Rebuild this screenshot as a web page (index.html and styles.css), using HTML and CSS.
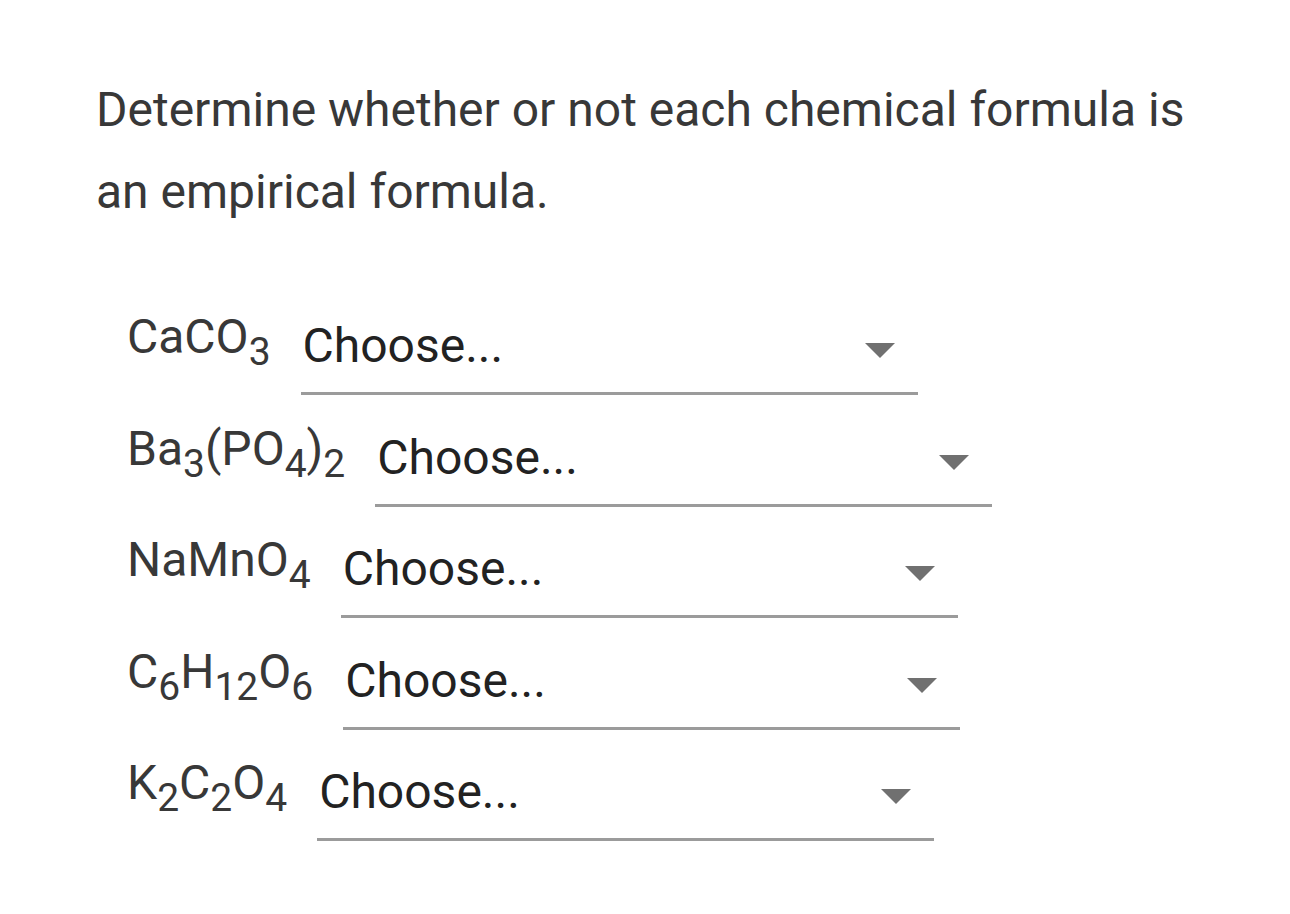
FILE: index.html
```html
<!DOCTYPE html>
<html>
<head>
<meta charset="utf-8">
<link rel="stylesheet" href="styles.css">
</head>
<body>
<div class="page">
  <p class="question">Determine whether or not each chemical formula is an empirical formula.</p>
  <div class="rows">
    <div class="row">
      <span class="formula">CaCO<sub>3</sub></span>
      <div class="select"><span class="value">Choose...</span><span class="arrow"></span></div>
    </div>
    <div class="row">
      <span class="formula">Ba<sub>3</sub>(PO<sub>4</sub>)<sub>2</sub></span>
      <div class="select"><span class="value">Choose...</span><span class="arrow"></span></div>
    </div>
    <div class="row">
      <span class="formula">NaMnO<sub>4</sub></span>
      <div class="select"><span class="value">Choose...</span><span class="arrow"></span></div>
    </div>
    <div class="row">
      <span class="formula">C<sub>6</sub>H<sub>12</sub>O<sub>6</sub></span>
      <div class="select"><span class="value">Choose...</span><span class="arrow"></span></div>
    </div>
    <div class="row">
      <span class="formula">K<sub>2</sub>C<sub>2</sub>O<sub>4</sub></span>
      <div class="select"><span class="value">Choose...</span><span class="arrow"></span></div>
    </div>
  </div>
</div>
</body>
</html>
```
FILE: styles.css
```css
html, body {
  margin: 0;
  padding: 0;
  background: #ffffff;
}
.page {
  padding: 69px 0 0 96px;
  font-family: Roboto, "Liberation Sans", sans-serif;
}
.question {
  margin: 0;
  width: 1120px;
  font-size: 48px;
  line-height: 82px;
  color: #383838;
}
.rows {
  margin-top: 67px;
  padding-left: 31px;
}
.row {
  display: flex;
  align-items: flex-start;
  height: 111.5px;
}
.formula {
  margin-top: 9px;
  margin-right: 30px;
  font-size: 48px;
  line-height: 56px;
  color: #383838;
  white-space: nowrap;
}
.formula sub {
  font-size: 39px;
  vertical-align: -12px;
  line-height: 0;
}
.select {
  position: relative;
  width: 617px;
  margin-top: 18px;
  padding-bottom: 18px;
  border-bottom: 3px solid #9b9b9b;
  font-size: 48px;
  line-height: 56px;
  color: #222222;
}
.value {
  padding-left: 2px;
}
.arrow {
  position: absolute;
  right: 23px;
  top: 25px;
  width: 0;
  height: 0;
  border-left: 15px solid transparent;
  border-right: 15px solid transparent;
  border-top: 15px solid #707070;
}
```
